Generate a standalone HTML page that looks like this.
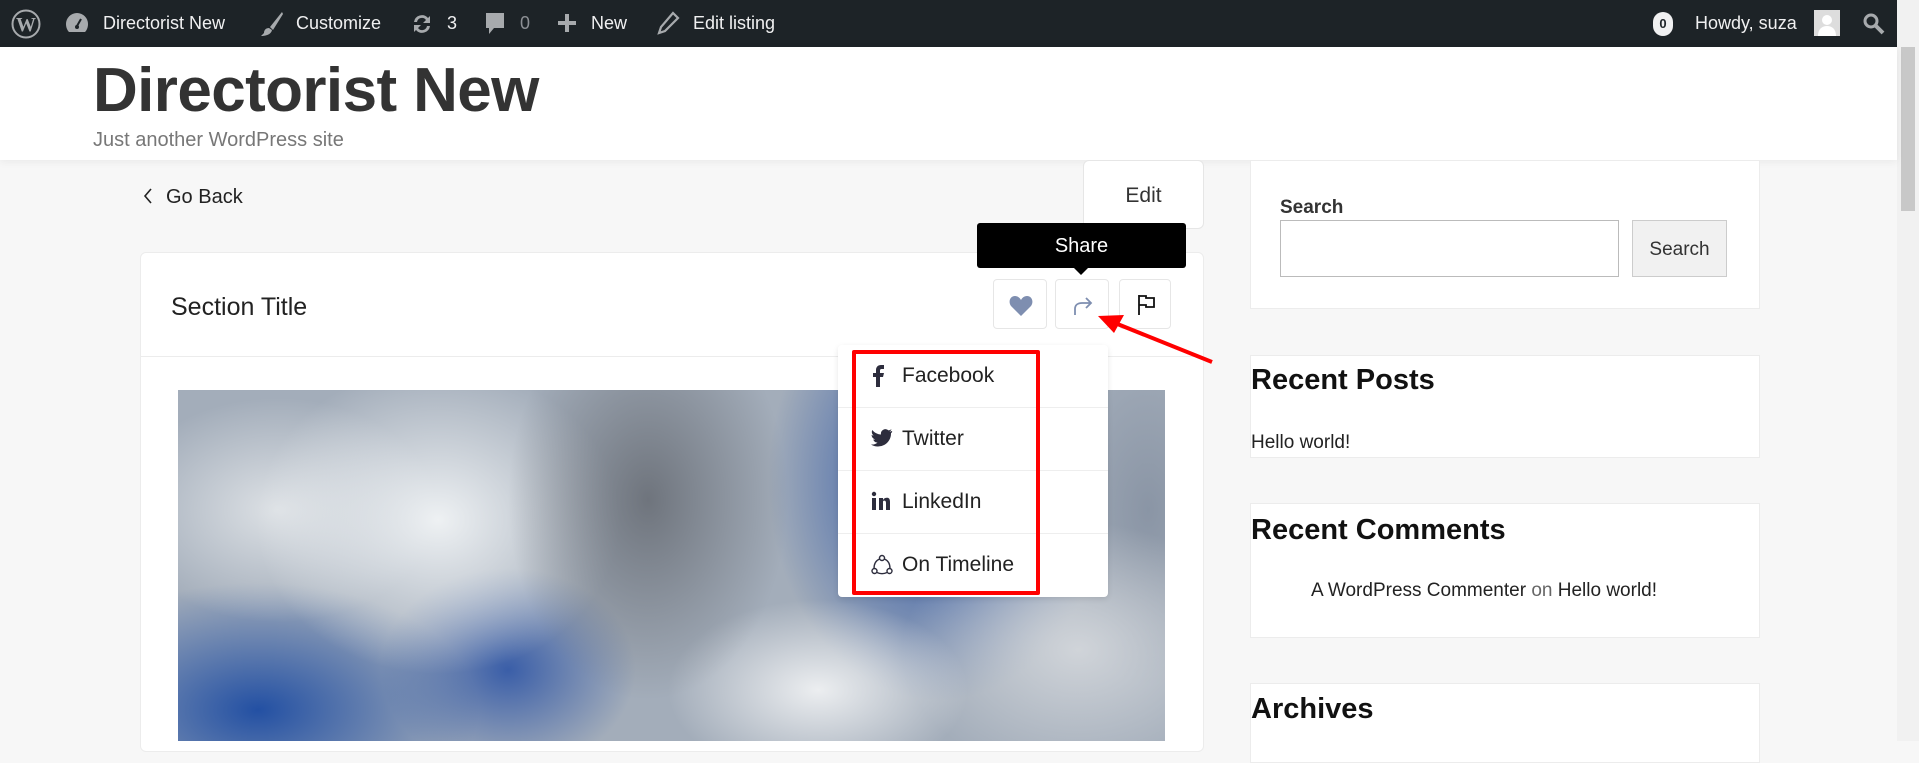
<!DOCTYPE html>
<html><head><meta charset="utf-8"><style>
*{box-sizing:border-box;margin:0;padding:0}
body{width:1919px;height:741px;overflow:hidden;background:#f7f7f7;font-family:"Liberation Sans",sans-serif;position:relative;color:#222}
.abs{position:absolute}
#bar{left:0;top:0;width:1897px;height:47px;background:#1d2327;color:#f0f0f1;font-size:18px}
#bar span{position:absolute;top:13px;white-space:nowrap}
#bar svg{position:absolute}
#hdr{left:0;top:47px;width:1897px;height:113px;background:#fff;box-shadow:0 2px 8px rgba(0,0,0,.06)}
.box{position:absolute;background:#fff;border:1px solid #ececec}
.ib{position:absolute;background:#fff;border:1px solid #e6e6e6;border-radius:4px}
.dd{position:absolute;left:838px;top:345px;width:270px;height:252px;background:#fff;border-radius:4px;box-shadow:0 2px 6px rgba(0,0,0,.1)}
.it{position:absolute;left:0;width:270px;height:63px;border-bottom:1px solid #eee;font-size:21px;color:#222}
.it span{position:absolute;left:64px;top:19px}
.it svg{position:absolute;left:33px;top:20px}
h2{position:absolute;font-size:29px;font-weight:bold;color:#111}
</style></head><body>
<div id="bar" class="abs">
<svg style="left:11px;top:9px" width="30" height="30" viewBox="0 0 30 30"><circle cx="15" cy="15" r="13.5" fill="none" stroke="#a7aaad" stroke-width="2"/><text x="15" y="22" text-anchor="middle" font-family="Liberation Serif" font-weight="bold" font-size="20" fill="#a7aaad">W</text></svg>
<svg style="left:65px;top:12px" width="24" height="22" viewBox="0 0 24 22"><path d="M12 1A11 11 0 0 0 1 12c0 3 1 6 3 8h16c2-2 3-5 3-8A11 11 0 0 0 12 1z" fill="#a7aaad"/><path d="M12 14l4-7" stroke="#1d2327" stroke-width="2"/><circle cx="12" cy="15" r="2" fill="#1d2327"/></svg>
<span style="left:103px">Directorist New</span>
<svg style="left:260px;top:11px" width="24" height="26" viewBox="0 0 24 26"><path d="M22 1L10 16l3 3L23 3z M9 17c-3 0-5 2-5 5l-3 3c4 0 10-1 11-6z" fill="#a7aaad"/></svg>
<span style="left:296px">Customize</span>
<svg style="left:410px;top:12px" width="24" height="24" viewBox="0 0 24 24"><path d="M4 10a8 8 0 0 1 14-4l2-2v7h-7l3-3a5 5 0 0 0-9 2z M20 14a8 8 0 0 1-14 4l-2 2v-7h7l-3 3a5 5 0 0 0 9-2z" fill="#a7aaad"/></svg>
<span style="left:447px">3</span>
<svg style="left:484px;top:12px" width="22" height="26" viewBox="0 0 22 26"><path d="M2 1h18v15H10l-5 6v-6H2z" fill="#a7aaad"/></svg>
<span style="left:520px;color:#8c8f94">0</span>
<svg style="left:557px;top:13px" width="20" height="20" viewBox="0 0 20 20"><path d="M8 1h4v7h7v4h-7v7H8v-7H1V8h7z" fill="#a7aaad"/></svg>
<span style="left:591px">New</span>
<svg style="left:656px;top:11px" width="24" height="24" viewBox="0 0 24 24"><path d="M17 2l5 5L9 20l-6 2 2-6z" fill="none" stroke="#a7aaad" stroke-width="2.2"/></svg>
<span style="left:693px">Edit listing</span>
<div class="abs" style="left:1653px;top:12px;width:20px;height:24px;border-radius:10px;background:#f0f0f1;color:#1d2327;font-size:13px;font-weight:bold;text-align:center;line-height:24px">0</div>
<span style="left:1695px">Howdy, suza</span>
<div class="abs" style="left:1814px;top:10px;width:26px;height:26px;background:#ddd"><svg width="26" height="26" viewBox="0 0 26 26"><circle cx="13" cy="10" r="5" fill="#fff"/><path d="M4 26c0-7 4-10 9-10s9 3 9 10z" fill="#fff"/></svg></div>
<svg style="left:1862px;top:12px" width="24" height="24" viewBox="0 0 24 24"><circle cx="9" cy="9" r="6" fill="none" stroke="#a7aaad" stroke-width="3"/><path d="M13 13l8 8" stroke="#a7aaad" stroke-width="4"/></svg>
</div>
<div class="abs" style="left:1897px;top:0;width:22px;height:741px;background:#f1f1f1"><div style="position:absolute;left:4px;top:47px;width:14px;height:164px;background:#c8c8c8"></div></div>
<div id="hdr" class="abs">
<div class="abs" style="left:93px;top:8px;font-size:62px;font-weight:bold;color:#333;letter-spacing:-0.6px">Directorist New</div>
<div class="abs" style="left:93px;top:82px;font-size:20px;color:#777">Just another WordPress site</div>
</div>
<svg class="abs" style="left:143px;top:187px" width="10" height="18" viewBox="0 0 10 18"><path d="M8 2L2 9l6 7" fill="none" stroke="#222" stroke-width="1.6"/></svg>
<div class="abs" style="left:166px;top:186px;font-size:20px">Go Back</div>
<div class="ib" style="left:1083px;top:160px;width:121px;height:69px;border-radius:6px;font-size:21px;text-align:center;line-height:70px;color:#333">Edit</div>
<div class="box" style="left:140px;top:252px;width:1064px;height:500px;border-radius:6px"></div>
<div class="abs" style="left:140px;top:356px;width:1064px;height:1px;background:#ececec"></div>
<div class="abs" style="left:171px;top:293px;font-size:25px;color:#222">Section Title</div>
<div class="ib" style="left:993px;top:279px;width:54px;height:50px"><svg style="position:absolute;left:15px;top:15px" width="24" height="22" viewBox="0 0 24 22"><path d="M12 21L2 11C-1 7 1 1 6 1c3 0 5 2 6 4 1-2 3-4 6-4 5 0 7 6 4 10z" fill="#7e8eb0"/></svg></div>
<div class="ib" style="left:1055px;top:279px;width:54px;height:50px"><svg style="position:absolute;left:16px;top:15px" width="22" height="22" viewBox="0 0 22 22"><path d="M3 20v-6c0-4 3-6 7-6h9M14 3l5 5-5 5" fill="none" stroke="#7e8eb0" stroke-width="1.8"/></svg></div>
<div class="ib" style="left:1119px;top:279px;width:52px;height:50px"><svg style="position:absolute;left:17px;top:14px" width="20" height="22" viewBox="0 0 20 22"><path d="M2 1v20M2 2h7v2h8v9H9v-2H2" fill="none" stroke="#111" stroke-width="1.8"/></svg></div>
<div class="abs" style="left:977px;top:223px;width:209px;height:45px;background:#000;border-radius:3px;color:#fff;font-size:20px;text-align:center;line-height:47px">Share</div>
<div class="abs" style="left:1073px;top:267px;width:0;height:0;border-left:8px solid transparent;border-right:8px solid transparent;border-top:8px solid #000"></div>
<div class="abs" style="left:178px;top:390px;width:987px;height:351px;overflow:hidden;background:
radial-gradient(ellipse 140px 200px at 470px 110px,rgba(105,110,118,.9),transparent),
radial-gradient(ellipse 260px 220px at 260px 130px,#eef1f3,transparent 70%),
radial-gradient(ellipse 200px 140px at 100px 120px,#dde1e5,transparent 80%),
radial-gradient(ellipse 200px 120px at 640px 300px,#eceef0,transparent 75%),
radial-gradient(ellipse 220px 160px at 900px 260px,#d0d4d9,transparent 80%),
radial-gradient(ellipse 200px 260px at 760px 90px,#234ea3,transparent 85%),
radial-gradient(ellipse 260px 150px at 80px 320px,#2350a3,transparent 85%),
radial-gradient(ellipse 150px 120px at 330px 280px,#3a5ea8,transparent 85%),
radial-gradient(ellipse 120px 220px at 970px 120px,#8a95a5,transparent 80%),
#a3adba"></div>
<div class="dd">
<div class="it" style="top:0"><svg width="14" height="22" viewBox="0 0 14 22"><path d="M9 22V12h3l1-4H9V6c0-1 0-2 2-2h2V0h-3C7 0 5 2 5 5v3H2v4h3v10z" fill="#2d2d3d"/></svg><span>Facebook</span></div>
<div class="it" style="top:63px"><svg width="22" height="20" viewBox="0 0 22 20"><path d="M21 3c-1 .4-2 .6-2.5.7 1-.6 1.600-1.4 2-2.4-1 .5-2 1-3 1.1A4.5 4.5 0 0 0 10 6.5C6.3 6.3 3.2 4.6 1.3 2c-1 1.9-.4 4.2 1.3 5.5-.7 0-1.4-.2-2-.6 0 2.2 1.5 4 3.6 4.5-.7.2-1.4.2-2 .1.6 1.8 2.3 3.1 4.3 3.1A9 9 0 0 1 0 16.5 13 13 0 0 0 20 5.3c.6-.6 1.5-1.4 1-2.3z" fill="#2d2d3d"/></svg><span>Twitter</span></div>
<div class="it" style="top:126px"><svg width="20" height="20" viewBox="0 0 20 20"><rect x="1" y="7" width="4" height="12" fill="#2d2d3d"/><circle cx="3" cy="3" r="2.2" fill="#2d2d3d"/><path d="M8 7h4v2c1-2 3-2.4 4.5-2.2C18.5 7 19 9 19 11v8h-4v-7c0-1.5-.5-2.4-1.8-2.4S12 10.5 12 12v7H8z" fill="#2d2d3d"/></svg><span>LinkedIn</span></div>
<div class="it" style="top:189px;border-bottom:none"><svg width="22" height="22" viewBox="0 0 22 22"><circle cx="11" cy="4" r="2.5" fill="none" stroke="#2d2d3d" stroke-width="1.4"/><circle cx="3.5" cy="17" r="2.5" fill="none" stroke="#2d2d3d" stroke-width="1.4"/><circle cx="18.5" cy="17" r="2.5" fill="none" stroke="#2d2d3d" stroke-width="1.4"/><path d="M8.5 5C5 6.5 3 10 3 14.5M13.5 5c3.5 1.5 5.5 5 5.5 9.5M6 18.5c3 1.5 7 1.5 10 0" fill="none" stroke="#2d2d3d" stroke-width="1.4"/></svg><span>On Timeline</span></div>
</div>
<div class="abs" style="left:852px;top:350px;width:188px;height:245px;border:4px solid #f00;border-radius:2px"></div>
<svg class="abs" style="left:1090px;top:305px" width="130" height="65" viewBox="0 0 130 65"><path d="M122 57L20 16" stroke="#f00" stroke-width="4"/><path d="M8 11l26-1-10 18z" fill="#f00"/></svg>
<div class="box" style="left:1250px;top:160px;width:510px;height:149px"></div>
<div class="abs" style="left:1280px;top:197px;font-size:19px;font-weight:bold;color:#333">Search</div>
<div class="abs" style="left:1280px;top:220px;width:339px;height:57px;background:#fff;border:1px solid #bbb"></div>
<div class="abs" style="left:1632px;top:220px;width:95px;height:57px;background:#f1f1f1;border:1px solid #ccc;font-size:19px;color:#333;text-align:center;line-height:57px">Search</div>
<div class="box" style="left:1250px;top:355px;width:510px;height:103px"></div>
<h2 style="left:1251px;top:364px">Recent Posts</h2>
<div class="abs" style="left:1251px;top:432px;font-size:19px;color:#222">Hello world!</div>
<div class="box" style="left:1250px;top:503px;width:510px;height:135px"></div>
<h2 style="left:1251px;top:514px">Recent Comments</h2>
<div class="abs" style="left:1311px;top:580px;font-size:19px;color:#222">A WordPress Commenter <span style="color:#666">on</span> Hello world!</div>
<div class="box" style="left:1250px;top:683px;width:510px;height:80px"></div>
<h2 style="left:1251px;top:693px">Archives</h2>
</body></html>
